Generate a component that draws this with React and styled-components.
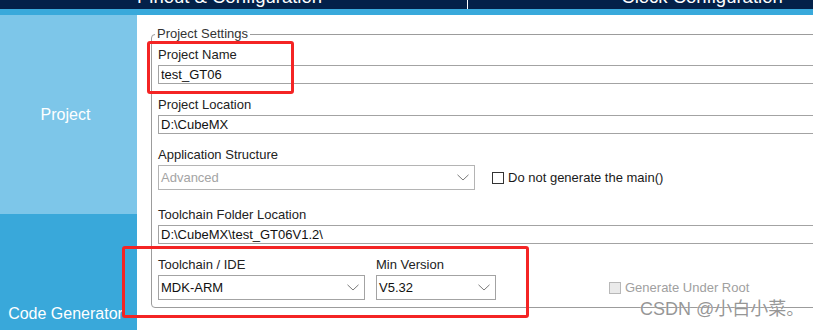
import React from 'react'
import styled, { createGlobalStyle } from 'styled-components'

const GlobalStyle = createGlobalStyle`
  html, body {
    margin: 0;
    padding: 0;
    background: #ffffff;
  }
  body {
    font-family: 'Liberation Sans', Arial, sans-serif;
  }
`

const Chevron = () => (
  <svg width='12' height='7' viewBox='0 0 12 7' fill='none'>
    <path d='M0.5 0.8 L6 6 L11.5 0.8' stroke='#7a7a7a' strokeWidth='1' />
  </svg>
)

const App = () => {
  return (
    <>
      <GlobalStyle />
      <Page>
        <TopBar>
          <Tab width={467}>
            <TabLabel>Pinout &amp; Configuration</TabLabel>
          </Tab>
          <Tab width={476} divider>
            <TabLabel>Clock Configuration</TabLabel>
          </Tab>
        </TopBar>
        <Stripe />
        <Body>
          <Sidebar>
            <NavItem tone='light'>Project</NavItem>
            <NavItem tone='dark'>Code Generator</NavItem>
          </Sidebar>
          <Main>
            <Settings>
              <Legend>Project Settings</Legend>

              <Group top={6}>
                <Label>Project Name</Label>
                <TextBox readOnly value='test_GT06' />
              </Group>

              <Group top={13}>
                <Label>Project Location</Label>
                <TextBox readOnly value='D:\CubeMX' />
              </Group>

              <Group top={13}>
                <Label>Application Structure</Label>
                <Row>
                  <Select width={317} disabled>
                    <span>Advanced</span>
                    <Chevron />
                  </Select>
                  <CheckOption gap={17}>
                    <Box />
                    <span>Do not generate the main()</span>
                  </CheckOption>
                </Row>
              </Group>

              <Group top={17}>
                <Label>Toolchain Folder Location</Label>
                <TextBox readOnly value='D:\CubeMX\test_GT06V1.2\' />
              </Group>

              <Group top={13}>
                <Row>
                  <Column>
                    <Label>Toolchain / IDE</Label>
                    <Select width={207}>
                      <span>MDK-ARM</span>
                      <Chevron />
                    </Select>
                  </Column>
                  <Column gap={11}>
                    <Label>Min Version</Label>
                    <Select width={120}>
                      <span>V5.32</span>
                      <Chevron />
                    </Select>
                  </Column>
                  <CheckOption gap={113} disabled>
                    <Box disabled />
                    <span>Generate Under Root</span>
                  </CheckOption>
                </Row>
              </Group>
            </Settings>
          </Main>
        </Body>

        <Highlight x={147} y={41} w={147} h={53} />
        <Highlight x={122} y={246} w={407} h={72} />
        <Watermark>CSDN @小白小菜。</Watermark>
      </Page>
    </>
  )
}

const Page = styled.div`
  position: relative;
  width: 813px;
  height: 330px;
  overflow: hidden;
  display: flex;
  flex-direction: column;
  background: #ffffff;
`

const TopBar = styled.div`
  display: flex;
  height: 9px;
  overflow: hidden;
  background: #032149;
  flex-shrink: 0;
`

const Tab = styled.div`
  width: ${p => p.width}px;
  flex-shrink: 0;
  display: flex;
  justify-content: center;
  border-left: ${p => (p.divider ? '1px solid #ffffff' : 'none')};
`

const TabLabel = styled.div`
  margin-top: -13px;
  margin-right: 8px;
  font-size: 18.5px;
  line-height: 20px;
  color: #ffffff;
  white-space: nowrap;
`

const Stripe = styled.div`
  height: 6px;
  background: #39a9db;
  flex-shrink: 0;
`

const Body = styled.div`
  display: flex;
  flex: 1;
  min-height: 0;
`

const Sidebar = styled.div`
  width: 137px;
  flex-shrink: 0;
  display: flex;
  flex-direction: column;
`

const NavItem = styled.div`
  height: 199px;
  flex-shrink: 0;
  display: flex;
  align-items: center;
  justify-content: center;
  padding-right: 6px;
  box-sizing: border-box;
  background: ${p => (p.tone === 'light' ? '#7dc6e9' : '#39a8da')};
  color: #ffffff;
  font-size: 16px;
  white-space: nowrap;
`

const Main = styled.div`
  flex: 1;
  min-width: 0;
  overflow: hidden;
  padding: 12px 0 0 14px;
`

const Settings = styled.fieldset`
  width: 720px;
  min-width: 720px;
  margin: 0;
  padding: 0 6px 7px 6px;
  border: 1px solid #9c9c9c;
  border-radius: 4px;
  box-sizing: border-box;
`

const Legend = styled.legend`
  margin-left: -3px;
  padding: 0 2px;
  font-size: 13px;
  line-height: 14px;
  color: #333333;
`

const Group = styled.div`
  margin-top: ${p => p.top}px;
  display: flex;
  flex-direction: column;
`

const Label = styled.div`
  height: 16px;
  line-height: 16px;
  margin-bottom: 2px;
  font-size: 13px;
  color: #222222;
  white-space: nowrap;
`

const TextBox = styled.input`
  display: block;
  width: 100%;
  height: 19px;
  box-sizing: border-box;
  margin: 0;
  padding: 0 2px;
  border: 1px solid #a3a3a3;
  border-radius: 0;
  outline: none;
  font-family: 'Liberation Sans', Arial, sans-serif;
  font-size: 13px;
  color: #111111;
  background: #ffffff;
`

const Row = styled.div`
  display: flex;
  align-items: flex-end;
`

const Column = styled.div`
  display: flex;
  flex-direction: column;
  margin-left: ${p => p.gap || 0}px;
`

const Select = styled.div`
  width: ${p => p.width}px;
  height: 25px;
  box-sizing: border-box;
  display: flex;
  align-items: center;
  justify-content: space-between;
  padding: 0 5px 0 2px;
  border: 1px solid ${p => (p.disabled ? '#b4b4b4' : '#a3a3a3')};
  background: #ffffff;
  font-size: 13px;
  color: ${p => (p.disabled ? '#a4a4a4' : '#111111')};
`

const CheckOption = styled.label`
  display: flex;
  align-items: center;
  gap: 4px;
  height: 25px;
  margin-left: ${p => p.gap}px;
  font-size: 13px;
  color: ${p => (p.disabled ? '#a0a0a0' : '#1a1a1a')};
  white-space: nowrap;
`

const Box = styled.span`
  width: 12px;
  height: 12px;
  box-sizing: border-box;
  border: 1px solid ${p => (p.disabled ? '#b8b8b8' : '#333333')};
  background: ${p => (p.disabled ? '#eaeaea' : '#ffffff')};
`

const Highlight = styled.div`
  position: absolute;
  left: ${p => p.x}px;
  top: ${p => p.y}px;
  width: ${p => p.w}px;
  height: ${p => p.h}px;
  box-sizing: border-box;
  border: 3px solid #f42424;
  border-radius: 3px;
  pointer-events: none;
`

const Watermark = styled.div`
  position: absolute;
  left: 640px;
  top: 298px;
  font-family: 'Liberation Sans', 'Noto Sans CJK SC', sans-serif;
  font-size: 18px;
  line-height: 22px;
  color: rgba(110, 110, 110, 0.72);
  text-shadow: 0 0 1px #ffffff;
  white-space: nowrap;
`

export default App
